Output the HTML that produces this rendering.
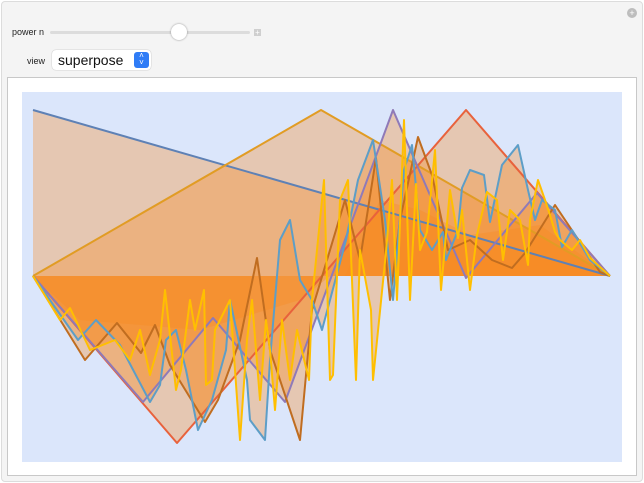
<!DOCTYPE html><html><head><style>
body{margin:0;width:644px;height:483px;background:#fff;font-family:"Liberation Sans",sans-serif;overflow:hidden;position:relative}
.frame{position:absolute;left:1px;top:1px;width:640px;height:479px;background:#f4f4f4;border:1px solid #dcdcdc;border-radius:4px}
.lbl{position:absolute;font-size:9px;color:#222}
.content{position:absolute;left:7px;top:77px;width:628px;height:397px;background:#fff;border:1px solid #c8c8c8}
</style></head><body>
<div class="frame"></div>
<div style="position:absolute;left:627px;top:8px;width:10px;height:10px;border-radius:50%;background:#bdbdbd;color:#fff;font-size:9px;line-height:10px;text-align:center">+</div>
<div class="lbl" style="left:12px;top:27px">power n</div>
<div style="position:absolute;left:50px;top:31px;width:200px;height:3px;background:#dcdcdc;border-radius:2px"></div>
<div style="position:absolute;left:171px;top:24px;width:16px;height:16px;border-radius:50%;background:#fff;box-shadow:0 0 2px rgba(0,0,0,.4)"></div>
<div style="position:absolute;left:254px;top:29px;width:7px;height:7px;background:#cfcfcf;color:#fff;font-size:8px;line-height:7px;text-align:center">+</div>
<div class="lbl" style="left:27px;top:56px">view</div>
<div style="position:absolute;left:52px;top:50px;width:99px;height:20px;background:#fff;border-radius:4px;box-shadow:0 0 1px rgba(0,0,0,.4)">
<span style="position:absolute;left:6px;top:2px;font-size:14px;color:#111">superpose</span>
<div style="position:absolute;right:2px;top:2px;width:15px;height:16px;background:#2f7cf6;border-radius:3px;color:#fff;font-size:8px;line-height:7px;text-align:center">˄<br>˅</div></div>
<div class="content"></div>
<svg style="position:absolute;left:0;top:0" width="644" height="483">
<rect x="22" y="92" width="600" height="370" fill="#dbe6fb"/>
<g fill="#f88a1e" fill-opacity="0.33" stroke="none">
<polygon points="33,110 610,276 33,276"/>
<polygon points="33,276 321,110 610,276"/>
<polygon points="33,276 177,443 466,110 610,276"/>
<polygon points="33,276 143,402 213,318 285,402 393,110 466,278 537,193 610,276"/>
<polygon points="33,276 85,360 117,323 141,353 155,325 170,365 205,422 218,400 240,340 257,258 270,350 300,440 312,310 345,200 360,260 376,158 390,300 400,220 418,137 432,175 448,250 470,240 492,260 512,268 525,253 555,205 600,272 610,276"/>
<polygon points="33,276 78,340 96,320 120,345 150,402 160,385 166,340 176,330 186,370 198,430 212,400 226,350 230,300 247,380 250,420 265,440 270,360 280,240 290,220 300,280 312,300 322,330 346,240 358,180 373,140 385,220 393,300 404,170 412,145 420,230 432,250 443,232 446,260 458,230 462,188 470,170 484,175 490,222 502,165 518,145 528,190 535,220 542,200 555,210 562,247 572,230 590,260 610,276"/>
<polygon points="33,276 60,320 70,308 90,350 115,340 130,360 140,330 150,375 160,340 165,290 176,390 181,370 190,300 195,330 204,290 206,385 212,380 215,330 230,300 240,440 247,340 252,300 260,400 266,320 270,350 275,410 282,320 290,380 297,330 309,380 312,300 324,180 330,380 333,375 340,200 348,180 356,380 360,250 371,310 373,380 386,252 392,180 397,300 404,120 410,300 416,184 420,250 427,232 435,150 441,290 450,190 458,238 462,210 470,290 477,235 487,192 497,200 503,260 510,210 520,220 528,265 530,220 538,180 545,200 550,215 555,232 560,240 572,250 580,240 590,258 610,276"/>
<polygon points="345,276 380,200 420,210 470,235 540,225 610,276"/>
<polygon points="33,276 330,276 300,300 200,330 80,320"/>
</g>
<g fill="none" stroke-width="2" stroke-linejoin="round">
<polyline points="33,110 610,276" stroke="#5e81b5"/>
<polyline points="33,276 321,110 610,276" stroke="#e19c24"/>
<polyline points="33,276 177,443 466,110 610,276" stroke="#e8623c"/>
<polyline points="33,276 143,402 213,318 285,402 393,110 466,278 537,193 610,276" stroke="#8f7ab8"/>
<polyline points="33,276 85,360 117,323 141,353 155,325 170,365 205,422 218,400 240,340 257,258 270,350 300,440 312,310 345,200 360,260 376,158 390,300 400,220 418,137 432,175 448,250 470,240 492,260 512,268 525,253 555,205 600,272 610,276" stroke="#c06d20"/>
<polyline points="33,276 78,340 96,320 120,345 150,402 160,385 166,340 176,330 186,370 198,430 212,400 226,350 230,300 247,380 250,420 265,440 270,360 280,240 290,220 300,280 312,300 322,330 346,240 358,180 373,140 385,220 393,300 404,170 412,145 420,230 432,250 443,232 446,260 458,230 462,188 470,170 484,175 490,222 502,165 518,145 528,190 535,220 542,200 555,210 562,247 572,230 590,260 610,276" stroke="#5d9ec7"/>
<polyline points="33,276 60,320 70,308 90,350 115,340 130,360 140,330 150,375 160,340 165,290 176,390 181,370 190,300 195,330 204,290 206,385 212,380 215,330 230,300 240,440 247,340 252,300 260,400 266,320 270,350 275,410 282,320 290,380 297,330 309,380 312,300 324,180 330,380 333,375 340,200 348,180 356,380 360,250 371,310 373,380 386,252 392,180 397,300 404,120 410,300 416,184 420,250 427,232 435,150 441,290 450,190 458,238 462,210 470,290 477,235 487,192 497,200 503,260 510,210 520,220 528,265 530,220 538,180 545,200 550,215 555,232 560,240 572,250 580,240 590,258 610,276" stroke="#ffbf00"/>
</g>
</svg>
</body></html>
